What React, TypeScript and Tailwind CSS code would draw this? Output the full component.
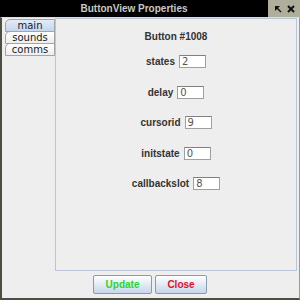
const FIELDS = [
  { label: "states", value: "2" },
  { label: "delay", value: "0" },
  { label: "cursorid", value: "9" },
  { label: "initstate", value: "0" },
  { label: "callbackslot", value: "8" },
];

const TABS = ["main", "sounds", "comms"];

export default function App() {
  return (
    <div className="w-[300px] h-[300px] flex flex-col bg-black font-['Liberation_Sans',Arial,sans-serif] select-none overflow-hidden">
      {/* Title bar */}
      <div className="h-[17px] flex shrink-0">
        <div className="flex-1 flex items-center justify-center text-[10px] font-bold text-[#c8c8c8]">
          ButtonView Properties
        </div>
        <div className="w-[32px] bg-[#aeae9a] flex items-center justify-around px-[3px]">
          <svg width="8" height="8" viewBox="0 0 8 8">
            <path d="M1 1H6L1 6Z" fill="#111" />
            <path d="M3 3L7 7" stroke="#111" strokeWidth="1.5" />
          </svg>
          <svg width="8" height="8" viewBox="0 0 8 8">
            <path d="M1 1L7 7M7 1L1 7" stroke="#111" strokeWidth="2" />
          </svg>
        </div>
      </div>

      {/* Window body */}
      <div className="flex-1 flex flex-col bg-[#eeeeee] border-l-2 border-b-2 border-r border-[#4e4e40] border-r-[#9a9a90] border-t border-t-[#dcdcdc]">
        <div className="flex-1 flex pr-[2px]">
          {/* Tabs */}
          <div className="w-[53px] pl-[3px] pt-[1px] flex flex-col shrink-0">
            {TABS.map((tab, i) => (
              <div
                key={tab}
                className={`h-[13px] w-[50px] flex items-center justify-center text-[10px] text-[#1a1a1a] font-['DejaVu_Sans',sans-serif] border border-[#a4a4a4] rounded-tl-[5px] ${
                  i > 0 ? "-mt-px" : ""
                } ${i === 0 ? "bg-gradient-to-b from-[#e2ecf8] to-[#c4d6ee]" : "bg-gradient-to-b from-[#ffffff] to-[#eeeeee]"}`}
              >
                {tab}
              </div>
            ))}
          </div>

          {/* Panel */}
          <div className="flex-1 border border-[#b8c6d8] flex flex-col items-center pt-[11px]">
            <div className="h-[13px] flex items-center text-[10px] font-bold text-[#333]">
              Button #1008
            </div>
            <div className="flex flex-col items-center mt-[12px] gap-[17.5px]">
              {FIELDS.map((f) => (
                <div key={f.label} className="h-[13px] flex items-center gap-[4px]">
                  <span className="text-[10px] font-bold text-[#333]">{f.label}</span>
                  <div className="w-[27px] h-[13px] bg-white border border-[#a0a0a0] border-t-[#808080] flex items-center pl-[2px] text-[10px] text-[#555] font-['DejaVu_Sans',sans-serif]">
                    {f.value}
                  </div>
                </div>
              ))}
            </div>
          </div>
        </div>

        {/* Buttons */}
        <div className="h-[27px] flex items-center gap-[3px] pl-[91px] shrink-0">
          <button className="w-[59px] h-[19px] border border-[#8a9ab0] bg-gradient-to-b from-[#ffffff] to-[#c6d6ea] text-[10px] font-bold text-[#2ad62a] rounded-[2px]">
            Update
          </button>
          <button className="w-[52px] h-[19px] border border-[#8a9ab0] bg-gradient-to-b from-[#ffffff] to-[#c6d6ea] text-[10px] font-bold text-[#e0102a] rounded-[2px]">
            Close
          </button>
        </div>
      </div>
    </div>
  );
}
